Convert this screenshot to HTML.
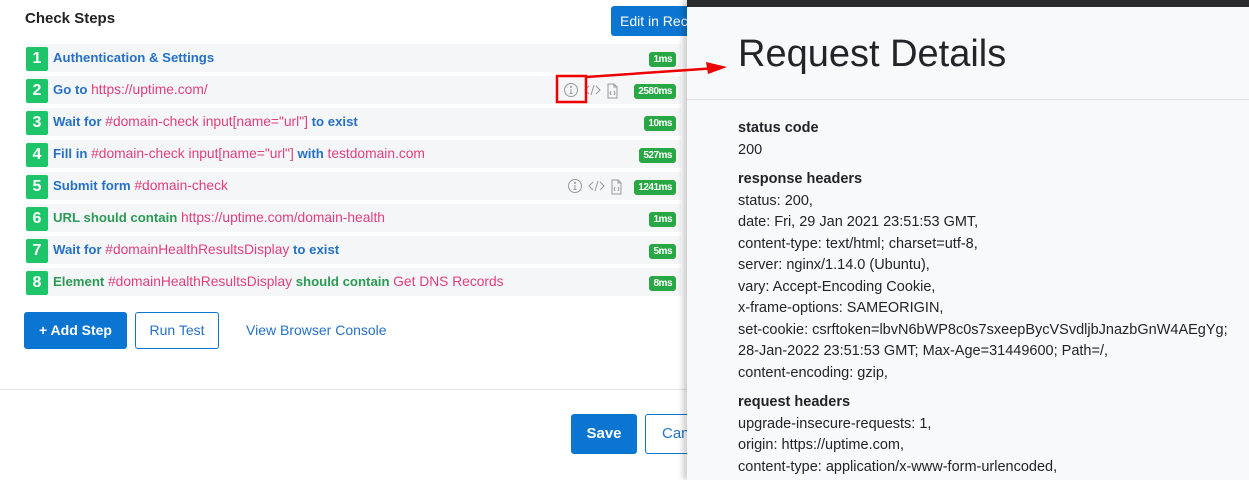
<!DOCTYPE html>
<html><head><meta charset="utf-8"><style>
*{margin:0;padding:0;box-sizing:border-box}
body{width:1249px;height:472px;overflow:hidden;background:#fff;font-family:"Liberation Sans",sans-serif;position:relative}
.title{position:absolute;left:25px;top:10px;font-size:15px;font-weight:bold;color:#222}
.edit{position:absolute;left:611px;top:6px;width:100px;height:30px;background:#0b76d1;border-radius:3px;color:#fff;font-size:14px;padding:7px 9px;white-space:nowrap;overflow:hidden}
.row{position:absolute;left:26px;width:655px;height:28px;background:#f5f6f8}
.num{position:absolute;left:0;top:3px;width:22px;height:24px;background:#1ec46a;color:#fff;font-weight:bold;font-size:16px;text-align:center;line-height:24px;border-radius:2px}
.txt{position:absolute;left:27px;top:6px;font-size:13.2px;white-space:nowrap}
.b{color:#2571c7;font-weight:bold}.g{color:#2b9a55;font-weight:bold}.p{color:#e0407a;font-size:13.8px}
.ms{position:absolute;top:8px;height:15px;background:#28a745;color:#fff;font-size:10px;font-weight:bold;line-height:15px;padding:0 4px;border-radius:3px;right:5px;letter-spacing:-.5px}
.ic{position:absolute;top:6px}
.btn{position:absolute;height:37px;border-radius:3px;font-size:14px;line-height:35px;text-align:center}
.panel{position:absolute;left:687px;top:0;width:562px;height:480px;background:#f8f9fa;box-shadow:-4px 0 6px rgba(0,0,0,.2)}
.bar{position:absolute;left:0;top:0;width:100%;height:7px;background:#2a2b2d}
.h1{position:absolute;left:51px;top:33px;font-size:38px;color:#212529;font-weight:300}
.hr{position:absolute;left:0;top:99px;width:100%;height:1px;background:#dde0e3}
.det{position:absolute;left:51px;top:118px;font-size:14.5px;color:#212529;line-height:21.5px;white-space:nowrap}
.det b{display:block;margin-top:8px}
</style></head><body>
<div class="title">Check Steps</div>
<div class="edit">Edit in Recorder</div>

<div class="row" style="top:44px"><div class="num">1</div><div class="txt"><span class="b">Authentication &amp; Settings</span></div><div class="ms">1ms</div></div>
<div class="row" style="top:76px"><div class="num">2</div><div class="txt"><span class="b">Go to</span> <span class="p">https://uptime.com/</span></div>
<svg class="ic" style="left:536px" width="60" height="18" viewBox="0 0 60 18" fill="none" stroke="#999" stroke-width="1"><circle cx="9" cy="8" r="6.5"/><line x1="9" y1="7" x2="9" y2="11.5"/><line x1="7.5" y1="11.5" x2="10.5" y2="11.5"/><circle cx="9" cy="4.8" r=".6" fill="#999"/><path d="M27 4l-4 4 4 4M34 4l4 4-4 4M32 3l-3 10"/><path d="M46 2h6l3 3v11h-9z M52 2v3h3"/><path d="M49 9l-1 2 1 2M52 9l1 2-1 2"/></svg>
<div class="ms">2580ms</div></div>
<div class="row" style="top:108px"><div class="num">3</div><div class="txt"><span class="b">Wait for</span> <span class="p">#domain-check input[name="url"]</span> <span class="b">to exist</span></div><div class="ms">10ms</div></div>
<div class="row" style="top:140px"><div class="num">4</div><div class="txt"><span class="b">Fill in</span> <span class="p">#domain-check input[name="url"]</span> <span class="b">with</span> <span class="p">testdomain.com</span></div><div class="ms">527ms</div></div>
<div class="row" style="top:172px"><div class="num">5</div><div class="txt"><span class="b">Submit form</span> <span class="p">#domain-check</span></div>
<svg class="ic" style="left:540px" width="60" height="18" viewBox="0 0 60 18" fill="none" stroke="#999" stroke-width="1"><circle cx="9" cy="8" r="6.5"/><line x1="9" y1="7" x2="9" y2="11.5"/><line x1="7.5" y1="11.5" x2="10.5" y2="11.5"/><circle cx="9" cy="4.8" r=".6" fill="#999"/><path d="M27 4l-4 4 4 4M34 4l4 4-4 4M32 3l-3 10"/><path d="M46 2h6l3 3v11h-9z M52 2v3h3"/><path d="M49 9l-1 2 1 2M52 9l1 2-1 2"/></svg>
<div class="ms">1241ms</div></div>
<div class="row" style="top:204px"><div class="num">6</div><div class="txt"><span class="g">URL should contain</span> <span class="p">https://uptime.com/domain-health</span></div><div class="ms">1ms</div></div>
<div class="row" style="top:236px"><div class="num">7</div><div class="txt"><span class="b">Wait for</span> <span class="p">#domainHealthResultsDisplay</span> <span class="b">to exist</span></div><div class="ms">5ms</div></div>
<div class="row" style="top:268px"><div class="num">8</div><div class="txt"><span class="g">Element</span> <span class="p">#domainHealthResultsDisplay</span> <span class="g">should contain</span> <span class="p">Get DNS Records</span></div><div class="ms">8ms</div></div>

<div class="btn" style="left:24px;top:312px;width:103px;background:#0b76d1;color:#fff;font-weight:bold;line-height:37px">+ Add Step</div>
<div class="btn" style="left:135px;top:312px;width:84px;border:1px solid #0b76d1;color:#2571c7">Run Test</div>
<div style="position:absolute;left:246px;top:322px;font-size:14px;color:#2571c7">View Browser Console</div>
<div style="position:absolute;left:0;top:389px;width:690px;height:1px;background:#e6e6e6"></div>
<div class="btn" style="left:571px;top:414px;width:66px;height:40px;background:#0b76d1;color:#fff;font-weight:bold;line-height:40px;font-size:15px">Save</div>
<div class="btn" style="left:645px;top:414px;width:60px;height:40px;border:1px solid #0b76d1;color:#2571c7;line-height:38px;font-size:15px;text-align:left;padding-left:16px">Cancel</div>

<div class="panel"><div class="bar"></div>
<div class="h1">Request Details</div><div class="hr"></div>
<div class="det"><b style="margin-top:0">status code</b>200<b>response headers</b>status: 200,<br>date: Fri, 29 Jan 2021 23:51:53 GMT,<br>content-type: text/html; charset=utf-8,<br>server: nginx/1.14.0 (Ubuntu),<br>vary: Accept-Encoding Cookie,<br>x-frame-options: SAMEORIGIN,<br>set-cookie: csrftoken=lbvN6bWP8c0s7sxeepBycVSvdljbJnazbGnW4AEgYg;<br>28-Jan-2022 23:51:53 GMT; Max-Age=31449600; Path=/,<br>content-encoding: gzip,<b>request headers</b>upgrade-insecure-requests: 1,<br>origin: https://uptime.com,<br>content-type: application/x-www-form-urlencoded,</div>
</div>

<svg style="position:absolute;left:0;top:0" width="1249" height="472">
<rect x="557" y="76" width="29" height="26" fill="none" stroke="#e00" stroke-width="2.5"/>
<line x1="586" y1="77" x2="710" y2="68.5" stroke="#e00" stroke-width="2.5"/>
<polygon points="727,67 706,62 708,74" fill="#e00"/>
</svg>
</body></html>
